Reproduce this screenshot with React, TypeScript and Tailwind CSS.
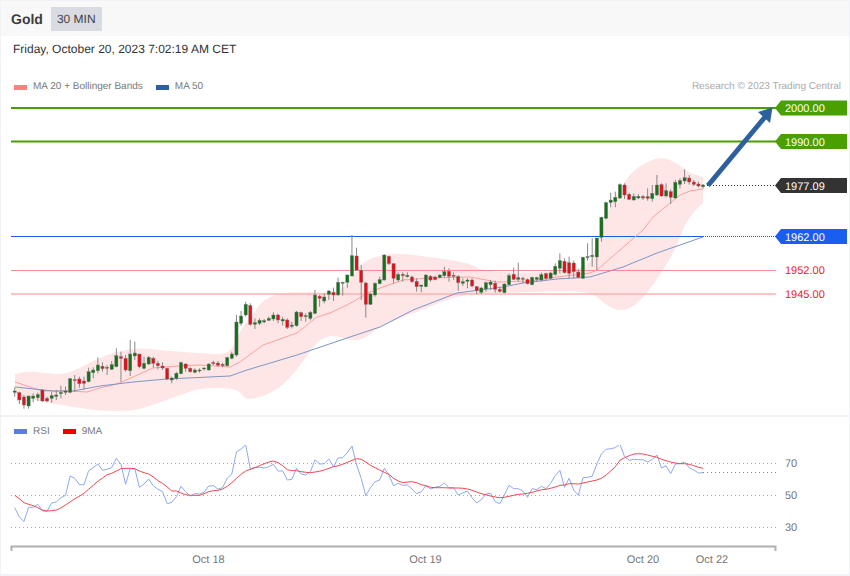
// candle rows: [high, bodyTop, bodyBottom, low, 1 = green / 0 = red], read off the 3x crops
type Row = number[];

const seg1: Row[] = [
  [172,183,187,200,1],[185,188,210,222,0],[195,201,225,236,0],[197,198,228,236,1],[190,198,205,217,1],
  [188,194,203,213,1],[178,180,213,215,0],[200,205,213,217,0],[185,197,205,218,1],[180,195,199,210,1],
  [167,187,191,205,1],[170,183,187,195,1],[145,146,187,190,1],[135,149,152,185,0],[140,147,161,173,0],
  [140,153,160,178,0],[113,125,155,157,1],[112,120,128,145,1],[82,105,122,130,1],[97,109,116,125,0],
  [105,112,115,135,0],[93,104,118,120,1],[55,77,110,112,1],[65,80,85,155,0],[75,85,120,125,0],
  [30,72,122,138,1],[35,69,78,90,1],[72,72,110,115,0],[80,100,115,118,1],[78,82,102,105,1],
  [80,85,100,113,0],[92,100,107,118,0],[97,108,114,120,0],[113,115,147,150,0],[140,144,150,160,1],
  [125,130,145,150,1],[95,98,131,133,1],[100,102,115,125,0],[112,115,125,128,0],[115,120,127,130,1],
  [115,120,123,128,1],[112,114,117,122,1],[100,102,120,122,1],[92,98,101,105,0],[93,99,106,110,0],
  [98,103,107,112,0],[80,83,107,110,1],[65,72,85,88,1],[-45,-24,75,80,1],
];
const seg2: Row[] = [
  [228,243,265,272,1],[200,208,240,245,1],[205,212,268,272,0],[250,263,268,282,1],[250,256,265,270,1],
  [252,257,261,265,1],[245,250,256,258,1],[232,240,252,258,1],[236,240,255,265,0],[245,253,258,272,1],
  [250,255,277,282,0],[260,270,274,280,1],[228,231,272,275,1],[230,233,245,258,0],[235,242,245,260,1],
  [228,232,250,256,1],[165,180,235,238,1],[180,184,190,215,0],[175,186,198,205,1],[165,168,178,195,1],
  [158,172,180,198,0],[128,142,180,182,1],[140,142,145,182,1],[118,120,142,158,1],[0,62,123,125,1],
  [38,63,105,108,0],[90,106,142,195,0],[140,144,208,248,0],[175,177,208,210,1],[142,145,180,185,1],
  [125,134,146,148,1],[58,60,135,137,1],[62,64,86,90,0],[85,86,130,145,0],[112,118,135,140,1],
  [112,118,122,140,0],[112,121,125,128,1],[122,126,140,143,0],[130,139,155,170,0],[150,150,154,172,1],
  [118,120,155,157,1],[120,124,135,140,0],[122,126,134,136,0],[118,120,128,130,1],[95,110,122,128,1],
  [100,109,124,140,0],[112,121,124,135,0],
];
const seg3: Row[] = [
  [135,140,158,182,0],[145,155,160,168,1],[145,150,154,175,1],[145,150,168,172,0],[168,170,182,193,0],
  [170,174,187,192,1],[155,158,177,185,1],[150,156,164,180,1],[152,160,178,188,0],[170,178,184,188,0],
  [160,162,188,190,1],[130,137,164,166,1],[113,133,148,150,0],[98,143,148,155,1],[140,145,148,160,0],
  [145,149,161,163,0],[140,142,164,166,1],[140,143,148,155,1],[128,134,150,155,1],[128,131,145,150,0],
  [125,129,145,148,1],[100,109,133,137,1],[70,92,115,130,1],[85,94,128,130,0],[80,98,130,145,0],
  [92,99,125,145,0],[118,126,142,145,0],[80,82,145,147,1],[40,80,83,92,1],[25,76,80,110,1],
  [24,24,81,120,1],
];
const seg4: Row[] = [
  [200,202,262,275,1],[155,158,205,208,1],[128,150,158,172,1],[125,142,155,172,1],[100,104,144,147,1],
  [100,105,135,147,0],[128,133,148,150,0],[130,139,150,152,1],[132,139,144,148,1],[135,140,144,150,0],
  [115,140,145,152,0],[105,130,146,155,1],[75,105,135,138,1],[100,104,138,140,0],[100,122,138,142,1],
  [118,125,142,162,0],[90,97,144,146,1],[85,92,103,115,1],[58,83,93,102,1],[75,84,96,104,0],
  [90,96,103,108,0],[95,102,108,112,0],[102,105,110,116,1],
];

const toPage = (rows: Row[], originY: number) =>
  rows.map((r) => [originY + r[0] / 3, originY + r[1] / 3, originY + r[2] / 3, originY + r[3] / 3, r[4]]);

const candles = [
  ...toPage(seg1, 330),
  ...toPage(seg2, 235),
  ...toPage(seg3, 230),
  ...toPage(seg4, 150),
];

const upperBand: number[][] = [
  [15,374],[25,371],[45,373],[67,375],[100,357],[133,347],[167,351],[200,353],[230,355],[240,330],[253,314],[263,300],
  [280,293],[303,292],[343,293],[360,262],[387,253],[417,255],[470,263],[480,270],[507,273],[550,272],[590,268],[598,237],
  [607,213],[623,183],[637,167],[660,156],[677,163],[687,172],[703,177],
];
const lowerBand: number[][] = [
  [703,203],[687,217],[677,247],[657,280],[637,305],[620,312],[603,303],[590,290],[507,293],[463,293],[417,312],[380,326],
  [363,340],[350,340],[323,333],[297,370],[280,388],[263,396],[253,399],[245,399],[237,388],[200,388],[183,394],[150,406],
  [133,411],[100,411],[67,406],[33,400],[15,394],
];

// round the band's corners: quadratic curves through the midpoints
const smoothRun = (pts: number[][]) => {
  let d = `L${pts[0][0]} ${pts[0][1]}`;
  for (let i = 1; i < pts.length - 1; i++) {
    const mx = (pts[i][0] + pts[i + 1][0]) / 2;
    const my = (pts[i][1] + pts[i + 1][1]) / 2;
    d += `Q${pts[i][0]} ${pts[i][1]} ${mx} ${my}`;
  }
  const last = pts[pts.length - 1];
  return `${d}L${last[0]} ${last[1]}`;
};
const bandPath = `M15 374${smoothRun(upperBand)}${smoothRun(lowerBand)}Z`;

const ma20 =
  "15,382 33,388 43,391 67,391 87,392 100,388 117,384 133,377 153,368 177,366 200,365 230,367 240,362 263,345 297,333 317,317 330,313 347,305 370,292 383,287 403,280 430,278 470,277 497,282 530,281 557,277 590,273 597,270 620,250 643,230 653,217 680,195 690,191 703,189";

const ma50 =
  "15,387 53,391 73,391 100,386 133,382 167,379 230,376 247,370 297,355 347,338 380,327 413,310 457,293 503,287 523,283 557,279 590,277 623,267 657,253 703,237";

const rsiYs = [
  278,305,320,277,277,268,288,289,264,261,248,241,183,190,209,209,167,158,147,166,163,158,130,148,208,161,161,217,207,192,
  212,223,230,266,262,245,214,230,243,236,237,232,213,212,222,218,190,177,110,102,89,162,157,157,159,155,148,168,168,195,
  193,160,177,180,170,134,147,146,132,155,129,128,113,93,150,190,242,218,200,195,160,180,212,205,211,210,222,236,230,
  212,222,217,214,204,218,218,240,234,228,248,264,254,237,235,260,266,240,211,221,221,228,247,221,224,214,221,205,182,166,
  217,190,225,241,188,187,184,147,117,103,101,98,87,125,136,133,134,134,141,133,120,159,152,176,147,146,141,158,165,174,173,
];

const ma9Ys = [
  241,251,263,268,272,278,285,288,287,285,279,270,261,251,244,235,223,211,199,189,179,175,168,161,160,160,161,168,173,177,
  186,197,205,216,228,228,234,239,241,241,241,236,230,227,226,222,214,203,190,178,168,163,158,152,146,141,138,143,152,164,
  167,167,170,172,173,171,169,165,160,155,152,148,142,136,131,133,141,151,158,165,172,178,190,198,203,201,200,203,209,
  212,217,218,218,218,219,219,219,220,222,226,231,236,239,243,246,248,247,244,241,238,237,235,232,228,224,223,220,216,211,
  210,206,206,207,204,201,198,195,190,180,168,155,136,128,122,117,116,117,120,124,127,133,137,141,144,146,146,148,152,157,160,
];

const xAt = (i: number) => 14.7 + 4.62 * i;
const toLine = (ys: number[]) =>
  ys.map((y, i) => `${xAt(i).toFixed(1)},${(415 + y / 3).toFixed(1)}`).join(" ");

function PriceTag({ y, label, fill }: { y: number; label: string; fill: string }) {
  return (
    <g>
      <polygon points={`775,${y} 781,${y - 7.5} 847,${y - 7.5} 847,${y + 7.5} 781,${y + 7.5}`} fill={fill} />
      <text x={785} y={y + 4} fontSize={11} fill="#fff">{label}</text>
    </g>
  );
}

function MainChart() {
  return (
    <svg className="block w-full h-[319px]" viewBox="1 96 848 319">
      <path d={bandPath} fill="#fee6e6" />

      <line x1={11} x2={776} y1={108} y2={108} stroke="#4a9f00" strokeWidth={2} />
      <line x1={11} x2={776} y1={141.5} y2={141.5} stroke="#4a9f00" strokeWidth={2} />
      <line x1={11} x2={703} y1={236.5} y2={236.5} stroke="#1a5ee8" strokeWidth={1} />
      <line x1={703} x2={776} y1={236.5} y2={236.5} stroke="#1a5ee8" strokeWidth={1} strokeDasharray="1 1" />
      <line x1={11} x2={776} y1={270.5} y2={270.5} stroke="#fb8c8c" strokeWidth={1.2} />
      <line x1={11} x2={776} y1={294} y2={294} stroke="#fdb0b0" strokeWidth={1.6} />

      <polyline points={ma20} fill="none" stroke="#fca0a0" strokeWidth={1} />
      <polyline points={ma50} fill="none" stroke="#7b97c6" strokeWidth={1} />

      {candles.map((c, i) => {
        const x = xAt(i);
        return (
          <g key={i}>
            <line x1={x} x2={x} y1={c[0]} y2={c[3]} stroke="#888" strokeWidth={1} />
            <rect
              x={x - 1.6}
              y={c[1]}
              width={3.2}
              height={Math.max(c[2] - c[1], 1)}
              fill={c[4] ? "#17701c" : "#e3101c"}
              stroke="#777"
              strokeWidth={0.4}
            />
          </g>
        );
      })}

      <line x1={707} x2={776} y1={185.5} y2={185.5} stroke="#333" strokeWidth={1} strokeDasharray="1 2" />
      <line x1={708} x2={765} y1={185.5} y2={117} stroke="#2e5f9e" strokeWidth={5} />
      <polygon points="772.5,107.5 770,123 758,112" fill="#2e5f9e" />

      <PriceTag y={108} label="2000.00" fill="#4aa000" />
      <PriceTag y={141.5} label="1990.00" fill="#4aa000" />
      <PriceTag y={185.5} label="1977.09" fill="#333333" />
      <PriceTag y={236.5} label="1962.00" fill="#1a5ef0" />
      <text x={785} y={274} fontSize={11} fill="#f01a1a">1952.00</text>
      <text x={785} y={298} fontSize={11} fill="#f01a1a">1945.00</text>
    </svg>
  );
}

function RsiChart() {
  return (
    <svg className="block w-full h-[129px]" viewBox="1 445 848 129">
      {[463.5, 495.5, 527.5].map((y) => (
        <line key={y} x1={11} x2={776} y1={y} y2={y} stroke="#aaa" strokeWidth={1} strokeDasharray="1 3" />
      ))}
      <line x1={703} x2={776} y1={472.5} y2={472.5} stroke="#5b7de0" strokeWidth={1} strokeDasharray="1 3" />

      <polyline points={toLine(rsiYs)} fill="none" stroke="#8fa9ee" strokeWidth={1} />
      <polyline points={toLine(ma9Ys)} fill="none" stroke="#f4474f" strokeWidth={1} />

      <text x={785} y={467} fontSize={11} fill="#777">70</text>
      <text x={785} y={499} fontSize={11} fill="#777">50</text>
      <text x={785} y={531} fontSize={11} fill="#777">30</text>

      <path d="M11.5 551V546.5H775.5V551" fill="none" stroke="#b0b0b0" strokeWidth={2} />
      <text x={208.5} y={563} fontSize={11} fill="#777" textAnchor="middle">Oct 18</text>
      <text x={425.5} y={563} fontSize={11} fill="#777" textAnchor="middle">Oct 19</text>
      <text x={643} y={563} fontSize={11} fill="#777" textAnchor="middle">Oct 20</text>
      <text x={712} y={563} fontSize={11} fill="#777" textAnchor="middle">Oct 22</text>
    </svg>
  );
}

function LegendItem({ color, label }: { color: string; label: string }) {
  return (
    <div className="flex items-center gap-[6px]">
      <span className={`block w-[13px] h-[5px] ${color}`} />
      <span>{label}</span>
    </div>
  );
}

export default function App() {
  return (
    <div className="w-[850px] h-[576px] bg-[#f0f2f5] px-px pt-px pb-[2px] flex flex-col font-['Liberation_Sans',Arial,sans-serif] [text-rendering:geometricPrecision] overflow-hidden">
      {/* price panel */}
      <div className="bg-white h-[414px] flex flex-col">
        <div className="h-[35px] bg-[#f8f8f8] flex items-center pl-[10px] pt-[1px] gap-[8px]">
          <span className="text-[14px] font-bold text-[#3c3c3c]">Gold</span>
          <span className="h-[24px] px-[6px] bg-[#d8dbe2] text-[12px] text-[#444] flex items-center">30 MIN</span>
        </div>
        <div className="h-[26px] pl-[12px] pt-[5px] text-[12px] leading-[16px] text-[#333]">
          Friday, October 20, 2023 7:02:19 AM CET
        </div>
        <div className="h-[34px] pl-[13px] pr-[8px] pt-[16px] flex items-center justify-between text-[10px] leading-[18px] text-[#777]">
          <div className="flex items-center gap-[13px]">
            <LegendItem color="bg-[#ff8080]" label="MA 20 + Bollinger Bands" />
            <LegendItem color="bg-[#2e5f9e]" label="MA 50" />
          </div>
          <span className="text-[#aaa]">Research © 2023 Trading Central</span>
        </div>
        <MainChart />
      </div>

      {/* RSI panel */}
      <div className="mt-[2px] bg-white h-[157px] flex flex-col">
        <div className="h-[28px] pl-[13px] flex items-center gap-[13px] text-[10px] text-[#777]">
          <LegendItem color="bg-[#5b7de0]" label="RSI" />
          <LegendItem color="bg-[#f00000]" label="9MA" />
        </div>
        <RsiChart />
      </div>
    </div>
  );
}
